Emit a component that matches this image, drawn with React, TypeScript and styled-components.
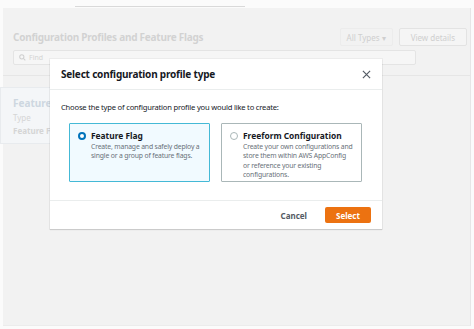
import React from 'react';
import styled, { createGlobalStyle } from 'styled-components';

const GlobalStyle = createGlobalStyle`
  html, body {
    margin: 0;
    padding: 0;
    background: #ffffff;
    font-family: "Noto Sans", "Open Sans", sans-serif;
  }
`;

const Screen = styled.div`
  position: relative;
  width: 474px;
  height: 329px;
  overflow: hidden;
  background: #fbfbfb;
`;

const TopStrip = styled.div`
  height: 8px;
  display: flex;
  align-items: flex-end;
  padding-left: 75px;
`;

const TabLine = styled.div`
  width: 170px;
  height: 1px;
  margin-bottom: 1px;
  background: #d9d9d9;
`;

const Frame = styled.div`
  margin: 0 3px;
  height: 317px;
  background: #f2f2f2;
  border-right: 1px solid #e6e6e6;
  border-bottom: 1px solid #ececec;
`;

const SectionHeader = styled.div`
  display: flex;
  flex-direction: column;
  gap: 4px;
  padding: 20px 3px 10px 10px;
  border-bottom: 1px solid #e6e6e6;
`;

const TitleRow = styled.div`
  display: flex;
  align-items: center;
  height: 18px;
`;

const PageTitle = styled.div`
  flex: 1;
  font-size: 10px;
  font-weight: 700;
  letter-spacing: -0.25px;
  color: #d2d2d2;
`;

const GhostButton = styled.div<{ $boxed?: boolean }>`
  height: 18px;
  box-sizing: border-box;
  padding: 0 ${(p) => (p.$boxed ? '11px' : '6px')};
  margin-left: 6px;
  display: flex;
  align-items: center;
  font-size: 8px;
  color: #cfcfcf;
  border: 1px solid ${(p) => (p.$boxed ? '#e3e3e3' : '#ececec')};
  border-radius: 2px;
  background: ${(p) => (p.$boxed ? '#f5f5f5' : '#f2f2f2')};
`;

const SearchBox = styled.div`
  width: 396px;
  height: 13px;
  border: 1px solid #e4e4e4;
  border-radius: 2px;
  background: #f6f6f6;
  display: flex;
  align-items: center;
  padding-left: 5px;
  gap: 3px;
  font-size: 7px;
  color: #d4d4d4;
`;

const CardArea = styled.div`
  padding: 11px 0 0 0;
`;

const GhostCard = styled.div`
  width: 60px;
  height: 57px;
  margin-left: -3px;
  box-sizing: border-box;
  padding: 8px 0 0 12px;
  background: #f4f6f8;
  border: 1px solid #e8ebee;
  display: flex;
  flex-direction: column;
  gap: 2px;
`;

const CardTitle = styled.div`
  font-size: 10px;
  font-weight: 700;
  color: #cdd7e0;
`;

const CardText = styled.div<{ $bold?: boolean }>`
  font-size: 8px;
  font-weight: ${(p) => (p.$bold ? 700 : 400)};
  color: #d5d5d5;
`;

const Modal = styled.div`
  position: absolute;
  left: 50px;
  top: 59px;
  width: 332px;
  background: #ffffff;
  box-shadow: 0 1px 1px rgba(0, 0, 0, 0.12), 0 0 0 1px rgba(0, 0, 0, 0.04);
  display: flex;
  flex-direction: column;
`;

const ModalHeader = styled.div`
  height: 31px;
  box-sizing: border-box;
  display: flex;
  align-items: center;
  justify-content: space-between;
  padding: 0 10px 0 11px;
  border-bottom: 1px solid #eaeded;
`;

const ModalTitle = styled.div`
  font-size: 10px;
  font-weight: 700;
  letter-spacing: -0.2px;
  color: #16191f;
`;

const CloseButton = styled.div`
  width: 12px;
  height: 12px;
  display: grid;
  place-items: center;
`;

const ModalBody = styled.div`
  padding: 11px 11px 18px 11px;
  border-bottom: 1px solid #eaeded;
`;

const Prompt = styled.div`
  font-size: 7.6px;
  letter-spacing: -0.2px;
  color: #16191f;
  line-height: 12px;
`;

const Tiles = styled.div`
  display: grid;
  grid-template-columns: 141px 141px;
  gap: 11px;
  margin: 10px 0 0 8px;
`;

const Tile = styled.div<{ $selected?: boolean }>`
  height: 59px;
  box-sizing: border-box;
  padding: 7px 6px 0 8px;
  display: flex;
  gap: 5px;
  border: 1px solid ${(p) => (p.$selected ? '#44b9d6' : '#aab7b8')};
  background: ${(p) => (p.$selected ? '#f1faff' : '#ffffff')};
  border-radius: 1px;
`;

const Radio = styled.div<{ $checked?: boolean }>`
  flex: none;
  width: 8px;
  height: 8px;
  margin-top: 1px;
  box-sizing: border-box;
  border-radius: 50%;
  border: ${(p) => (p.$checked ? '2.5px solid #0073bb' : '1px solid #aab7b8')};
  background: #ffffff;
`;

const TileText = styled.div`
  display: flex;
  flex-direction: column;
`;

const TileTitle = styled.div`
  font-size: 8.4px;
  font-weight: 700;
  color: #16191f;
  line-height: 10px;
`;

const TileDesc = styled.div`
  font-size: 6.8px;
  letter-spacing: -0.15px;
  white-space: nowrap;
  color: #687078;
  line-height: 9.3px;
  margin-top: 1px;
`;

const ModalFooter = styled.div`
  height: 28px;
  display: flex;
  align-items: center;
  justify-content: flex-end;
  gap: 18px;
  padding: 0 11px;
`;

const LinkButton = styled.div`
  font-size: 8px;
  font-weight: 700;
  color: #545b64;
`;

const PrimaryButton = styled.div`
  width: 46px;
  height: 16px;
  display: grid;
  place-items: center;
  background: #ec7211;
  border-radius: 2px;
  font-size: 8px;
  font-weight: 700;
  color: #ffffff;
`;

const tiles = [
  {
    title: 'Feature Flag',
    desc: ['Create, manage and safely deploy a', 'single or a group of feature flags.'],
    selected: true,
  },
  {
    title: 'Freeform Configuration',
    desc: [
      'Create your own configurations and',
      'store them within AWS AppConfig',
      'or reference your existing',
      'configurations.',
    ],
    selected: false,
  },
];

function App() {
  return (
    <Screen>
      <GlobalStyle />
      <TopStrip>
        <TabLine />
      </TopStrip>
      <Frame>
        <SectionHeader>
          <TitleRow>
            <PageTitle>Configuration Profiles and Feature Flags</PageTitle>
            <GhostButton>All Types ▾</GhostButton>
            <GhostButton $boxed>View details</GhostButton>
          </TitleRow>
          <SearchBox>
            <svg width="7" height="7" viewBox="0 0 10 10">
              <circle cx="4" cy="4" r="3" fill="none" stroke="#d0d0d0" strokeWidth="1.5" />
              <path d="M6.3 6.3 9 9" stroke="#d0d0d0" strokeWidth="1.5" />
            </svg>
            Find
          </SearchBox>
        </SectionHeader>
        <CardArea>
          <GhostCard>
            <CardTitle>Feature</CardTitle>
            <CardText>Type</CardText>
            <CardText $bold>Feature Fl</CardText>
          </GhostCard>
        </CardArea>
      </Frame>

      <Modal>
        <ModalHeader>
          <ModalTitle>Select configuration profile type</ModalTitle>
          <CloseButton>
            <svg width="9" height="9" viewBox="0 0 10 10">
              <path d="M1 1 9 9M9 1 1 9" stroke="#545b64" strokeWidth="1.3" />
            </svg>
          </CloseButton>
        </ModalHeader>
        <ModalBody>
          <Prompt>Choose the type of configuration profile you would like to create:</Prompt>
          <Tiles>
            {tiles.map((t) => (
              <Tile key={t.title} $selected={t.selected}>
                <Radio $checked={t.selected} />
                <TileText>
                  <TileTitle>{t.title}</TileTitle>
                  <TileDesc>
                    {t.desc.map((line) => (
                      <div key={line}>{line}</div>
                    ))}
                  </TileDesc>
                </TileText>
              </Tile>
            ))}
          </Tiles>
        </ModalBody>
        <ModalFooter>
          <LinkButton>Cancel</LinkButton>
          <PrimaryButton>Select</PrimaryButton>
        </ModalFooter>
      </Modal>
    </Screen>
  );
}

export default App;
